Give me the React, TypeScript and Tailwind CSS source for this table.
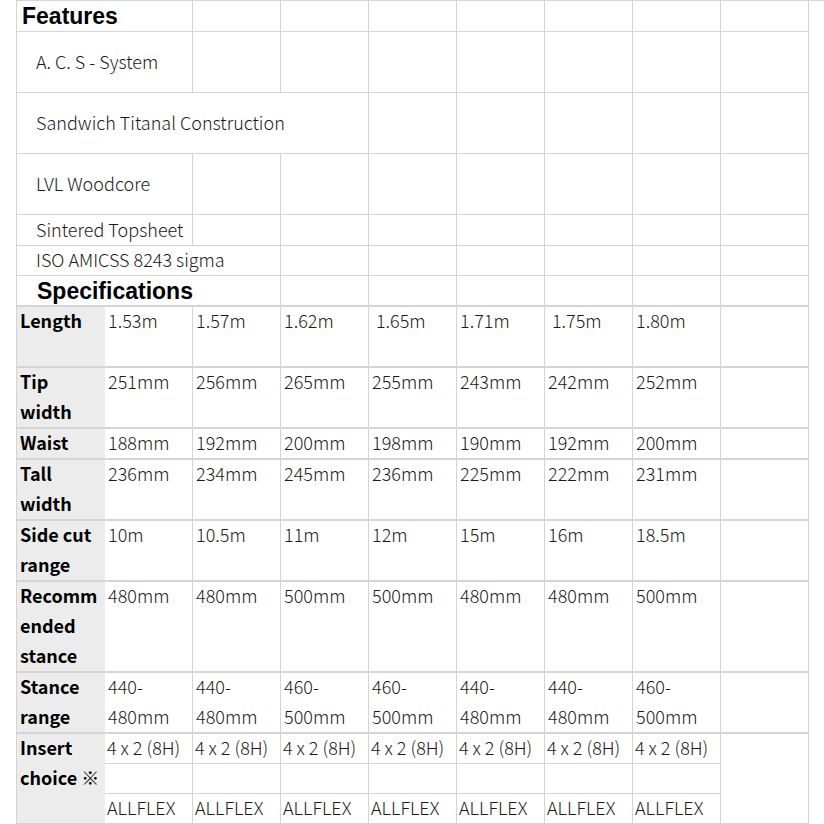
import React from "react";

const jp = "font-['Noto_Sans_CJK_JP','Noto_Sans',sans-serif]";
const head = "font-['Liberation_Sans',Arial,sans-serif] text-[23px] font-bold text-black";
const cell = "border-r border-b border-[#d4d4d4]";
const specCell = "border-r border-b border-t border-[#d4d4d4]";
const labelCell = "border-r-[#ececec] bg-[#ececec] pl-[3px] font-bold text-black";

type Spec = { label: React.ReactNode; values: React.ReactNode[] };

const specs: Spec[] = [
  { label: "Length", values: ["1.53m", "1.57m", "1.62m", "\u00a01.65m", "1.71m", "\u00a01.75m", "1.80m"] },
  { label: <>Tip<br />width</>, values: ["251mm", "256mm", "265mm", "255mm", "243mm", "242mm", "252mm"] },
  { label: "Waist", values: ["188mm", "192mm", "200mm", "198mm", "190mm", "192mm", "200mm"] },
  { label: <>Tall<br />width</>, values: ["236mm", "234mm", "245mm", "236mm", "225mm", "222mm", "231mm"] },
  { label: <>Side cut<br />range</>, values: ["10m", "10.5m", "11m", "12m", "15m", "16m", "18.5m"] },
  { label: <>Recomm<br />ended<br />stance</>, values: ["480mm", "480mm", "500mm", "500mm", "480mm", "480mm", "500mm"] },
  {
    label: <>Stance<br />range</>,
    values: [
      <>440-<br />480mm</>, <>440-<br />480mm</>, <>460-<br />500mm</>, <>460-<br />500mm</>,
      <>440-<br />480mm</>, <>440-<br />480mm</>, <>460-<br />500mm</>,
    ],
  },
];

const features: [string, string][] = [
  ["A. C. S - System", "col-span-2"],
  ["Sandwich Titanal Construction", "col-span-4"],
  ["LVL Woodcore", "col-span-2"],
  ["Sintered Topsheet", "col-span-2"],
  ["ISO AMICSS 8243 sigma", "col-span-3"],
];
const spanCount: Record<string, number> = { "col-span-2": 2, "col-span-3": 3, "col-span-4": 4 };

function Blanks({ n, cls = cell }: { n: number; cls?: string }) {
  return (
    <>
      {Array.from({ length: n }).map((_, i) => (
        <div key={i} className={cls} />
      ))}
    </>
  );
}

export default function App() {
  return (
    <div className="h-[824px] overflow-hidden bg-white pl-4">
      <div
        className={`grid grid-cols-[repeat(9,88px)] grid-rows-[31px_61px_61px_61px_31px_30px_30px_61px_61px_31px_61px_61px_91px_61px_31px_30px_30px] border-l border-t border-[#d4d4d4] text-[18px] font-light leading-[30px] text-[#1a1a1a] ${jp}`}
      >
        <div className={`${cell} col-span-2 flex items-center pl-[5px] ${head}`}>Features</div>
        <Blanks n={7} />

        {features.map(([text, span]) => (
          <React.Fragment key={text}>
            <div className={`${cell} ${span} flex items-center whitespace-nowrap pb-[3px] pl-[19px]`}>{text}</div>
            <Blanks n={9 - spanCount[span]} />
          </React.Fragment>
        ))}

        <div className={`${cell} col-span-3 flex items-center pl-[20px] ${head}`}>Specifications</div>
        <Blanks n={6} />

        {specs.map((s, r) => (
          <React.Fragment key={r}>
            <div className={`${specCell} ${labelCell}`}>
              <div className="-mt-[2px]">{s.label}</div>
            </div>
            {s.values.map((v, i) => (
              <div key={i} className={`${specCell} whitespace-nowrap px-[3px]`}>
                <div className="-mt-[2px]">{v}</div>
              </div>
            ))}
            <div className={specCell} />
          </React.Fragment>
        ))}

        <div className={`${specCell} ${labelCell} row-span-3`}>
          <div className="-mt-[2px]">
            Insert
            <br />
            choice <span className="font-normal">※</span>
          </div>
        </div>
        {Array.from({ length: 7 }).map((_, i) => (
          <div key={i} className={`${specCell} whitespace-nowrap px-[2px]`}>
            <div className="-mt-[2px]">4 x 2 (8H)</div>
          </div>
        ))}
        <div className={`${specCell} row-span-3`} />
        <Blanks n={7} />
        {Array.from({ length: 7 }).map((_, i) => (
          <div key={i} className={`${cell} whitespace-nowrap px-[2px]`}>
            <div className="-mt-[2px]">ALLFLEX</div>
          </div>
        ))}
      </div>
    </div>
  );
}
